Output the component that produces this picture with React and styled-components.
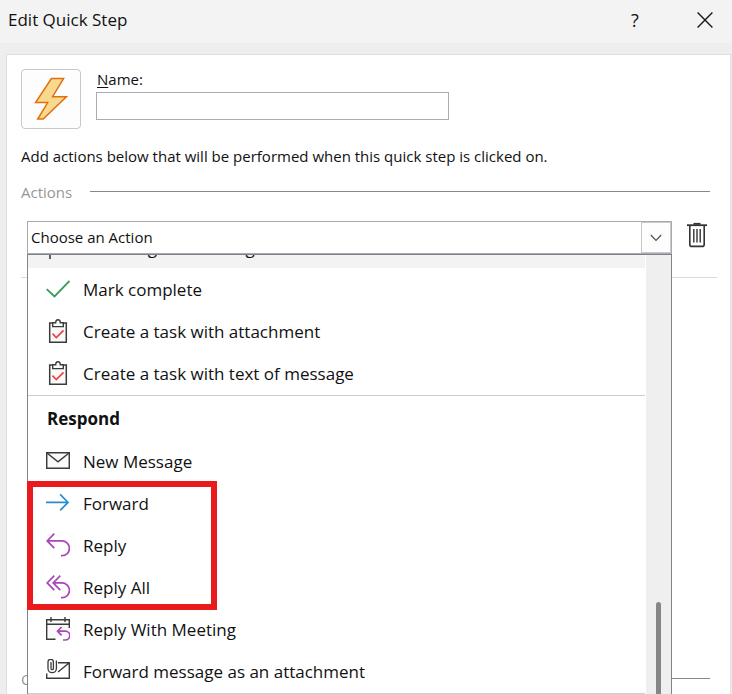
import React from 'react';
import styled, { createGlobalStyle, css } from 'styled-components';

const GlobalStyle = createGlobalStyle`
  *, *::before, *::after { box-sizing: border-box; }
  html, body, #root { height: 100%; }
  body {
    margin: 0;
    overflow: hidden;
    background: #eeeeee;
    color: #111;
    font-family: "Segoe UI", "Open Sans", "Noto Sans", sans-serif;
    font-size: 15px;
  }
  button, input, select { font: inherit; color: inherit; }
  svg { display: block; flex: none; }
`;

const Dialog = styled.div`
  display: flex;
  flex-direction: column;
  height: 100%;
  overflow: hidden;
`;

const TitleBar = styled.header`
  display: flex;
  align-items: flex-start;
  flex: none;
  height: 43px;
  padding: 4px 8px 0;
  background: #f3f3f3;
`;

const Title = styled.h1`
  flex: 1;
  margin: 0;
  font-size: 17px;
  font-weight: 400;
  line-height: 32px;
`;

const TitleButton = styled.button`
  display: flex;
  align-items: center;
  justify-content: center;
  width: 38px;
  height: 32px;
  margin-left: 32px;
  padding: 0;
  border: 0;
  background: none;
  font-size: 18px;
`;

const Body = styled.main`
  display: flex;
  flex: 1;
  min-height: 0;
  padding: 11px 1px 0 6px;
  overflow: hidden;
`;

const Panel = styled.form`
  display: flex;
  flex-direction: column;
  flex: 1;
  min-width: 0;
  padding: 14px 13px 0 14px;
  border: 1px solid #dfdfe1;
  border-bottom: 0;
  background: #fff;
`;

const NameRow = styled.div`
  display: flex;
  gap: 15px;
`;

const IconButton = styled.button`
  display: flex;
  align-items: center;
  justify-content: center;
  flex: none;
  width: 60px;
  height: 60px;
  padding: 0;
  border: 1px solid #c8c8c8;
  border-radius: 4px;
  background: #fdfdfd;
`;

const NameField = styled.div`
  display: flex;
  flex-direction: column;
  flex: 0 1 353px;
  min-width: 0;
`;

const NameLabel = styled.label`
  padding-left: 1px;
  line-height: 20px;
  margin-bottom: 3px;

  u { text-underline-offset: 2px; }
`;

const NameInput = styled.input`
  width: 100%;
  height: 28px;
  padding: 0 4px;
  border: 1px solid #ababb0;
  background: #fff;
  outline: none;
`;

const Hint = styled.p`
  margin: 17px 0 0;
  line-height: 20px;
`;

const Legend = styled.h2`
  display: flex;
  align-items: center;
  flex: none;
  gap: 18px;
  margin: 0;
  padding-right: 7px;
  color: #969696;
  font-size: 15px;
  font-weight: 400;
  line-height: 20px;

  &::after {
    content: "";
    flex: 1;
    height: 1px;
    margin-bottom: 2px;
    background: #88888c;
  }
`;

const ActionsSection = styled.section`
  display: flex;
  flex-direction: column;
  flex: none;
  height: 487px;
  margin-top: 16px;
`;

const ActionRow = styled.div`
  display: flex;
  gap: 15px;
  margin-top: 19px;
  padding: 0 10px 23px 6px;
  border-bottom: 1px solid #dadada;
`;

const Combo = styled.div`
  position: relative;
  flex: 1;
  min-width: 0;
`;

const ComboField = styled.div`
  display: flex;
  height: 33px;
  border: 1px solid #a9a9ae;
  background: #fff;
`;

const ComboSelect = styled.select`
  flex: 1;
  min-width: 0;
  padding: 0 3px 2px;
  border: 0;
  background: none;
  outline: none;
  appearance: none;
`;

const ComboToggle = styled.button`
  display: flex;
  align-items: center;
  justify-content: center;
  width: 30px;
  padding: 0;
  border: 1px solid #c9c9c9;
  background: #fdfdfd;
`;

const DeleteButton = styled.button`
  display: flex;
  height: 28px;
  padding: 0;
  border: 0;
  background: none;
`;

const Menu = styled.div`
  position: absolute;
  top: 100%;
  left: 0;
  right: 0;
  z-index: 1;
  display: flex;
  height: 520px;
  border: 1px solid #82828c;
  background: #fff;
`;

const MenuView = styled.div`
  flex: 1;
  min-width: 0;
  padding-right: 1px;
  clip-path: inset(0 0 0 -1px);
`;

const MenuContent = styled.div`
  margin-top: -29px;
`;

const Group = styled.ul`
  margin: 0;
  padding: 0 0 1px;
  border-bottom: 1px solid #cdcdcd;
  list-style: none;
`;

const GroupTitle = styled.li`
  padding: 2px 19px 0;
  font-size: 17px;
  font-weight: 700;
  line-height: 42px;
`;

const MarkedItems = styled.ul`
  position: relative;
  margin: 0;
  padding: 0;
  list-style: none;

  &::after {
    content: "";
    position: absolute;
    top: -1px;
    bottom: -2px;
    left: -1px;
    width: 190px;
    border: 6px solid #e81a1c;
    pointer-events: none;
  }
`;

const MenuButton = styled.button`
  display: flex;
  align-items: center;
  gap: 13px;
  width: 100%;
  height: 42px;
  padding: 0 18px;
  border: 0;
  background: none;
  font-size: 17px;
  text-align: left;
  white-space: nowrap;
  ${(p) => p.$active && css`background: #f3f3f3;`}
`;

const ScrollTrack = styled.div`
  flex: none;
  width: 25px;
  padding: 347px 10px 0;
  background: #efefef;
`;

const ScrollThumb = styled.div`
  height: 140px;
  border-radius: 3px;
  background: #868686;
`;

const Glyph = ({ children }) => (
  <svg width="24" height="24" viewBox="0 0 24 24" fill="none" aria-hidden="true">
    {children}
  </svg>
);

const DARK = '#3b3b3b';
const PURPLE = '#aa47b8';

const FlagIcon = () => (
  <Glyph>
    <path d="M4 2V24M4 3H20L16 8L20 13H4" stroke={DARK} strokeWidth="1.6" />
  </Glyph>
);

const CheckIcon = () => (
  <Glyph>
    <path d="M.7 12.2L8.5 19.5L23.5 4" stroke="#3a9b57" strokeWidth="1.8" />
  </Glyph>
);

const TaskIcon = () => (
  <Glyph>
    <path d="M7 4H3.7V23.3H20.3V4H17" fill="#fafafa" stroke={DARK} strokeWidth="1.5" />
    <path d="M6.7 7.6V3.8H9.7C9.7 1.8 10.6.8 12 .8S14.3 1.8 14.3 3.8H17.3V7.6Z" fill="#fff" stroke={DARK} strokeWidth="1.4" />
    <path d="M6.5 14.7L10.3 18.5L17.5 11.3" stroke="#ee4040" strokeWidth="1.7" />
  </Glyph>
);

const MailIcon = () => (
  <Glyph>
    <path d="M.7 3.7H23.3V19.3H.7Z" fill="#fafafa" stroke={DARK} strokeWidth="1.5" />
    <path d="M1 4L12 12.8L23 4" stroke={DARK} strokeWidth="1.5" />
  </Glyph>
);

const ForwardIcon = () => (
  <Glyph>
    <path d="M0 11.4H22M14.2 3.4L22 11.4L14.2 19.4" stroke="#2a8dcc" strokeWidth="1.7" />
  </Glyph>
);

const ReplyIcon = () => (
  <Glyph>
    <path d="M8.3 .7L1.2 7.9L8.3 15.1M1.2 7.9H16A7.3 7.3 0 0 1 16 22.7H15" stroke={PURPLE} strokeWidth="1.7" />
  </Glyph>
);

const ReplyAllIcon = () => (
  <Glyph>
    <path d="M8.3 .7L1.2 7.9L8.3 15.1M14.3 .7L7.2 7.9L14.3 15.1M7.2 7.9H16A7.3 7.3 0 0 1 16 22.7H15" stroke={PURPLE} strokeWidth="1.7" />
  </Glyph>
);

const MeetingIcon = () => (
  <Glyph>
    <path d="M9.5 22.3H.7V2.7H23.3V11" fill="#fafafa" stroke={DARK} strokeWidth="1.4" />
    <path d="M.7 7.3H23.3M5 0V5M19 0V5" stroke={DARK} strokeWidth="1.4" />
    <path d="M15.6 10L11.5 14.2L15.6 18.4M11.5 14.2H19.4A4.4 4.4 0 0 1 19.4 23H17" stroke={PURPLE} strokeWidth="1.7" />
  </Glyph>
);

const AttachmentIcon = () => (
  <Glyph>
    <path d="M12 3.7H23.3V19.3H.7V14.5M12 13L23 4" stroke={DARK} strokeWidth="1.4" />
    <path d="M5 3V9.5A1.2 1.2 0 0 0 7.4 9.5V3A2.6 2.6 0 0 0 2 3V9.5A4 4 0 0 0 10.4 9.5V1.5" stroke={DARK} strokeWidth="1.3" />
  </Glyph>
);

const taskItems = [
  { label: 'Clear flags on message', icon: FlagIcon, active: true },
  { label: 'Mark complete', icon: CheckIcon },
  { label: 'Create a task with attachment', icon: TaskIcon },
  { label: 'Create a task with text of message', icon: TaskIcon },
];
const markedItems = [
  { label: 'Forward', icon: ForwardIcon },
  { label: 'Reply', icon: ReplyIcon },
  { label: 'Reply All', icon: ReplyAllIcon },
];

const MenuItem = ({ label, icon: Icon, active }) => (
  <li>
    <MenuButton type="button" $active={active}>
      <Icon />
      {label}
    </MenuButton>
  </li>
);

export default function App() {
  return (
    <Dialog role="dialog" aria-labelledby="dialog-title">
      <GlobalStyle />
      <TitleBar>
        <Title id="dialog-title">Edit Quick Step</Title>
        <TitleButton type="button" aria-label="Help">?</TitleButton>
        <TitleButton type="button" aria-label="Close">
          <svg width="16" height="16" viewBox="0 0 16 16" aria-hidden="true">
            <path d="M.6 .6L15.4 15.4M15.4 .6L.6 15.4" stroke="#1a1a1a" strokeWidth="1.4" />
          </svg>
        </TitleButton>
      </TitleBar>
      <Body>
        <Panel>
          <NameRow>
            <IconButton type="button" aria-label="Choose icon">
              <svg width="34" height="44" viewBox="0 0 34 44" aria-hidden="true">
                <path d="M17.4 1.5H29.6L18.6 19.7H32.4L9.2 42H3.7L13.7 25.6H1.6Z" fill="#f8da8e" stroke="#e0700f" strokeWidth="1.5" />
              </svg>
            </IconButton>
            <NameField>
              <NameLabel htmlFor="step-name"><u>N</u>ame:</NameLabel>
              <NameInput id="step-name" type="text" />
            </NameField>
          </NameRow>
          <Hint>Add actions below that will be performed when this quick step is clicked on.</Hint>
          <ActionsSection>
            <Legend>Actions</Legend>
            <ActionRow>
              <Combo>
                <ComboField>
                  <ComboSelect aria-label="Action" defaultValue="">
                    <option value="">Choose an Action</option>
                  </ComboSelect>
                  <ComboToggle type="button" aria-label="Show actions">
                    <svg width="12" height="8" viewBox="0 0 12 8" fill="none" aria-hidden="true">
                      <path d="M.8 1L6 6.3L11.2 1" stroke="#505050" strokeWidth="1.2" />
                    </svg>
                  </ComboToggle>
                </ComboField>
                <Menu>
                  <MenuView>
                    <MenuContent>
                      <Group>
                        {taskItems.map((item) => <MenuItem key={item.label} {...item} />)}
                      </Group>
                      <Group>
                        <GroupTitle>Respond</GroupTitle>
                        <MenuItem label="New Message" icon={MailIcon} />
                        <li>
                          <MarkedItems>
                            {markedItems.map((item) => <MenuItem key={item.label} {...item} />)}
                          </MarkedItems>
                        </li>
                        <MenuItem label="Reply With Meeting" icon={MeetingIcon} />
                        <MenuItem label="Forward message as an attachment" icon={AttachmentIcon} />
                      </Group>
                    </MenuContent>
                  </MenuView>
                  <ScrollTrack><ScrollThumb /></ScrollTrack>
                </Menu>
              </Combo>
              <DeleteButton type="button" aria-label="Delete action">
                <svg width="20" height="28" viewBox="0 0 20 28" fill="none" aria-hidden="true">
                  <path d="M2.8 4V23.4Q2.8 25.4 4.8 25.4H15.2Q17.2 25.4 17.2 23.4V4" stroke="#333" strokeWidth="1.6" />
                  <path d="M0 4.2H20" stroke="#333" strokeWidth="1.8" />
                  <path d="M6.5 2.8H13.5" stroke="#333" strokeWidth="1.8" />
                  <path d="M6.8 8V21.6M10 8V21.6M13.2 8V21.6" stroke="#333" strokeWidth="1.4" />
                </svg>
              </DeleteButton>
            </ActionRow>
          </ActionsSection>
          <Legend>Optional</Legend>
        </Panel>
      </Body>
    </Dialog>
  );
}
